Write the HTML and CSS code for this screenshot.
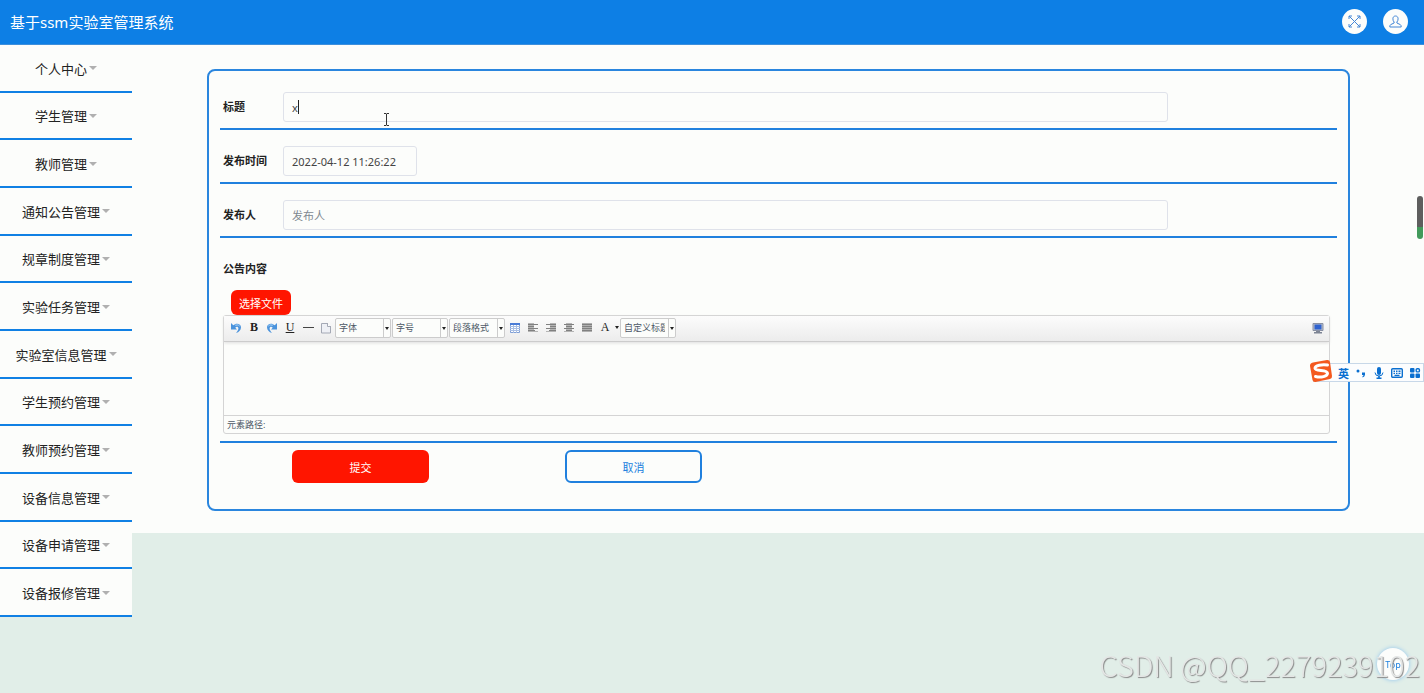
FILE: index.html
```html
<!DOCTYPE html>
<html lang="zh-CN">
<head>
  <meta charset="UTF-8">
  <meta name="viewport" content="width=device-width, initial-scale=1">
  <title>基于ssm实验室管理系统</title>
  <link rel="stylesheet" href="styles.css">
</head>
<body>
  <header class="navbar">
    <h1 class="navbar-title">基于ssm实验室管理系统</h1>
    <div class="navbar-tools">
      <button type="button" class="round-button" aria-label="全屏">
        <svg width="13" height="13" viewBox="0 0 13 13"><path d="M1 1l11 11M12 1L1 12M1 4V1h3M9 1h3v3M12 9v3H9M4 12H1V9"/></svg>
      </button>
      <button type="button" class="round-button" aria-label="用户">
        <svg width="13" height="13" viewBox="0 0 13 13"><path d="M6.500 1C4.800 1 3.900 2.200 3.900 3.800c0 1.500.5 2.500 1.200 3.200v1L1.700 9.600C1 10 .8 10.800.8 12h11.400c0-1.200-.2-2-.9-2.400L7.900 8V7c.7-.7 1.200-1.700 1.200-3.200C9.100 2.200 8.200 1 6.500 1z"/></svg>
      </button>
    </div>
  </header>

  <div class="page">
    <nav class="sidebar">
      <a href="#">个人中心</a>
      <a href="#">学生管理</a>
      <a href="#">教师管理</a>
      <a href="#">通知公告管理</a>
      <a href="#">规章制度管理</a>
      <a href="#">实验任务管理</a>
      <a href="#">实验室信息管理</a>
      <a href="#">学生预约管理</a>
      <a href="#">教师预约管理</a>
      <a href="#">设备信息管理</a>
      <a href="#">设备申请管理</a>
      <a href="#">设备报修管理</a>
    </nav>

    <main class="content">
      <form class="card">
        <div class="form-row">
          <label for="title">标题</label>
          <div class="field">
            <input type="text" id="title" value="x">
            <span class="text-caret"></span>
            <svg class="mouse" width="7" height="13" viewBox="0 0 7 13"><path d="M1 .5h2l.5.5.5-.5h2M3.500 1v11M1 12.500h2l.5-.5.5.5h2"/></svg>
          </div>
        </div>
        <div class="form-row">
          <label for="time">发布时间</label>
          <input type="text" id="time" class="short" value="2022-04-12 11:26:22">
        </div>
        <div class="form-row">
          <label for="author">发布人</label>
          <div class="field">
            <input type="text" id="author" placeholder="发布人">
          </div>
        </div>
        <div class="form-row editor-row">
          <label for="body">公告内容</label>
          <button type="button" class="file-button">选择文件</button>
          <div class="editor">
            <div class="toolbar">
              <button type="button" aria-label="撤销">
                <svg width="12" height="12" viewBox="0 0 12 12"><path fill="#4b93dc" d="M1 1v6.500h6L5.300 5.800c1.200-1.600 3.100-1 3.100.8 0 1.400-.9 2.700-2.400 4.400 3-.9 5-3 5-5.800C11 1.800 6.300.2 3.300 3.300z"/><path fill="#9bc9f3" d="M5 2.800c2.300-1.400 5-.3 5 2.200-.9-1.700-2.700-2-4.500-1z"/></svg>
              </button>
              <button type="button" class="letter bold">B</button>
              <button type="button" aria-label="重做">
                <svg width="12" height="12" viewBox="0 0 12 12"><path fill="#4b93dc" d="M11 1v6.500H5l1.700-1.700C5.500 4.200 3.600 4.800 3.600 6.600c0 1.400.9 2.700 2.400 4.400C3 10.100 1 8 1 5.200 1 1.800 5.700.2 8.700 3.300z"/><path fill="#9bc9f3" d="M7 2.800C4.700 1.400 2 2.500 2 5c.9-1.700 2.700-2 4.500-1z"/></svg>
              </button>
              <button type="button" class="letter underline">U</button>
              <button type="button" aria-label="分隔线">
                <svg width="12" height="12" viewBox="0 0 12 12"><path fill="#444" d="M1 5h11v1H1z"/></svg>
              </button>
              <button type="button" aria-label="清空文档">
                <svg width="12" height="12" viewBox="0 0 12 12"><path fill="#eef0f5" stroke="#a4a9b5" d="M1.500 1.500h6l3 3v6.500h-9z"/><path fill="#fff" stroke="#a4a9b5" d="M7.500 1v3.500H11"/></svg>
              </button>
              <span class="combo"><select aria-label="字体"><option>字体</option></select></span>
              <span class="combo"><select aria-label="字号"><option>字号</option></select></span>
              <span class="combo"><select aria-label="段落格式"><option>段落格式</option></select></span>
              <button type="button" aria-label="表格">
                <svg width="12" height="12" viewBox="0 0 12 12"><path fill="#fff" stroke="#7f9fd6" d="M1.500 1.500h9v9h-9z"/><path fill="#4a7cd6" d="M1 1h10v2H1z"/><path stroke="#a9bfe4" d="M1 4.500h10M1 6.500h10M1 8.500h10M4.500 3v8M7.500 3v8"/></svg>
              </button>
              <button type="button" aria-label="左对齐">
                <svg width="12" height="12" viewBox="0 0 12 12"><path stroke="#808080" d="M1 2.500h10M1 4.500h6M1 6.500h10M1 8.500h7"/><path stroke="#b5b5b5" d="M1 1.500h6M1 3.500h6M1 5.500h6M1 7.500h6M1 9.500h10"/></svg>
              </button>
              <button type="button" aria-label="右对齐">
                <svg width="12" height="12" viewBox="0 0 12 12"><path stroke="#808080" d="M1 2.500h10M5 4.500h6M1 6.500h10M4 8.500h7"/><path stroke="#b5b5b5" d="M5 1.500h6M5 3.500h6M5 5.500h6M5 7.500h6M1 9.500h10"/></svg>
              </button>
              <button type="button" aria-label="居中">
                <svg width="12" height="12" viewBox="0 0 12 12"><path stroke="#808080" d="M1 2.500h10M3 4.500h6M1 6.500h10M3 8.500h6"/><path stroke="#b5b5b5" d="M3 1.500h6M3 3.500h6M3 5.500h6M3 7.500h6M1 9.500h10"/></svg>
              </button>
              <button type="button" aria-label="两端对齐">
                <svg width="12" height="12" viewBox="0 0 12 12"><path fill="#b0b0b0" d="M1 1h10v9H1z"/><path stroke="#808080" d="M1 2.500h10M1 4.500h10M1 6.500h10M1 8.500h10"/></svg>
              </button>
              <button type="button" class="letter">A</button>
              <button type="button" class="drop" aria-label="字体颜色"></button>
              <span class="combo"><select aria-label="自定义标题"><option>自定义标题</option></select></span>
              <button type="button" class="fullscreen" aria-label="全屏编辑">
                <svg width="12" height="12" viewBox="0 0 12 12"><path fill="#b9bfcc" stroke="#8990a3" d="M1 1.500h10v7H1z"/><path fill="#2f62cf" d="M2.500 2.500h7v5h-7z"/><path fill="#7d8494" d="M4 9h4v1h2v1.500H2V10h2z"/></svg>
              </button>
            </div>
            <textarea id="body"></textarea>
            <div class="path">元素路径:</div>
          </div>
        </div>
        <div class="actions">
          <button type="submit" class="submit">提交</button>
          <button type="button" class="cancel">取消</button>
        </div>
      </form>
    </main>
  </div>

  <div class="scroll-mark"></div>

  <div class="ime">
    <svg class="ime-logo" width="24" height="24" viewBox="0 0 24 24"><path fill="#f4591f" d="M4 3.500L18 1q2.500-.3 3 2l2 14q.3 2.500-2 3L6.500 23Q4 23.300 3.500 21L1 7Q.8 4 4 3.500z"/><path fill="none" stroke="#fff" stroke-width="3" stroke-linecap="round" d="M18.500 6C13 5 6 6.500 6 9.200c0 3.300 12.500 1.200 12.500 5C18.500 17.300 12 19 6.500 17.500"/></svg>
    <span>英</span>
    <svg width="12" height="12" viewBox="0 0 12 12"><circle cx="3" cy="4" r="1.500"/><path d="M7 5.500h3v2.200Q9.800 9.600 7.500 10.500V9.300Q8.400 9 8.500 8H7z"/></svg>
    <svg width="12" height="12" viewBox="0 0 12 12"><rect x="4" y="0" width="4" height="8" rx="2"/><path fill="none" stroke="#0a6fd0" d="M2 5.500Q2.200 9 6 9t4-3.500"/><path d="M5.200 9h1.600v1.600H8.500V12h-5v-1.400h1.700z"/></svg>
    <svg width="12" height="12" viewBox="0 0 12 12"><rect x=".7" y="1.700" width="10.600" height="8.600" rx="1" fill="none" stroke="#0a6fd0" stroke-width="1.400"/><path d="M2.500 3.500H4V5H2.500zM5 3.500h1.500V5H5zM7.500 3.500H9.500V5h-2zM2.500 5.700H4v1.200H2.500zM5 5.700h1.500v1.200H5zM7.500 5.700h2v1.200h-2zM3.500 7.800h5V9h-5z"/></svg>
    <svg width="12" height="12" viewBox="0 0 12 12"><rect x="1" y="1" width="4.500" height="4.500" rx="1"/><rect x="1" y="6.500" width="4.500" height="4.500" rx="1"/><rect x="6.500" y="6.500" width="4.500" height="4.500" rx="1"/><rect x="7.200" y="1.700" width="3.200" height="3.200" rx="1" fill="none" stroke="#0a6fd0" stroke-width="1.400"/></svg>
  </div>

  <button type="button" class="back-top">Top</button>
  <div class="watermark">CSDN @QQ_2279239102</div>
</body>
</html>
```

FILE: styles.css
```css
* {
  box-sizing: border-box;
}
body {
  margin: 0;
  min-height: 100vh;
  background: #e1eee8;
  color: #222;
  font-family: "Noto Sans", "Noto Sans CJK SC", sans-serif;
  font-size: 11px;
}
button, input, select, textarea {
  font-family: inherit;
  font-size: inherit;
}
button {
  padding: 0;
  border: none;
  cursor: pointer;
}

/* top bar */
.navbar {
  display: flex;
  align-items: center;
  justify-content: space-between;
  height: 45px;
  padding: 0 16px 2px 10px;
  background: #0d7fe5;
  border-bottom: 1px solid #3d8fdc;
}
.navbar-title {
  margin: 0;
  color: #fff;
  font-size: 15px;
  font-weight: 400;
}
.navbar-tools {
  display: flex;
  gap: 16px;
}
.round-button {
  display: flex;
  align-items: center;
  justify-content: center;
  width: 25px;
  height: 25px;
  border-radius: 50%;
  background: #fcfdfb;
}
.round-button svg {
  fill: none;
  stroke: #4286d6;
}

/* side menu */
.page {
  display: flex;
  align-items: flex-start;
}
.sidebar {
  display: grid;
  grid-auto-rows: 1fr;
  flex: none;
  width: 132px;
  min-height: 572px;
  background: #fcfdfb;
}
.sidebar a {
  display: flex;
  align-items: center;
  justify-content: center;
  gap: 2px;
  padding-top: 1px;
  border-bottom: 2px solid #1080e4;
  color: #222;
  font-size: 13px;
  text-decoration: none;
}
.sidebar a::after {
  content: "";
  border: 4px solid transparent;
  border-top-color: #b0b0b0;
  border-bottom: none;
}

/* form */
.content {
  flex: 1;
  min-width: 0;
  padding: 24px 74px 22px 75px;
  background: #fcfdfb;
}
.card {
  padding: 5px 11px 26px;
  border: 2px solid #2a86de;
  border-radius: 8px;
}
.form-row {
  display: flex;
  padding: 16px 7px 6px 3px;
  border-bottom: 2px solid #2080de;
}
.form-row label {
  flex: none;
  width: 60px;
  line-height: 30px;
  font-weight: 700;
}
.field {
  position: relative;
  flex: 1;
  margin-right: 162px;
}
.form-row input {
  display: block;
  width: 100%;
  height: 30px;
  padding: 0 8px;
  border: 1px solid #dfe2ea;
  border-radius: 3px;
  outline: none;
  background: #fcfdfb;
  color: #444;
}
.form-row input.short {
  width: 134px;
}
.form-row input::placeholder {
  color: #808890;
}
.text-caret {
  position: absolute;
  left: 15px;
  top: 8px;
  width: 1px;
  height: 14px;
  background: #222;
}
.mouse {
  position: absolute;
  left: 100px;
  top: 21px;
  fill: none;
  stroke: #333;
}
.editor-row {
  display: block;
  padding-bottom: 7px;
}
.editor-row label {
  display: block;
}
.file-button {
  display: block;
  width: 60px;
  height: 25px;
  margin: 6px 0 0 8px;
  border-radius: 6px;
  background: #ff1500;
  color: #fff;
}

/* rich text editor */
.editor {
  border: 1px solid #d4d4d4;
  border-radius: 3px;
}
.toolbar {
  position: relative;
  display: flex;
  align-items: center;
  height: 26px;
  padding: 0 2px 2px 3px;
  border-bottom: 1px solid #ccc;
  background: linear-gradient(#fcfcfc, #ececec);
  box-shadow: 0 1px 3px #ddd;
}
.toolbar button {
  display: flex;
  align-items: center;
  justify-content: center;
  width: 18px;
  height: 18px;
  background: none;
  color: #222;
}
.toolbar .letter {
  font-family: "Liberation Serif", serif;
  font-size: 12px;
}
.toolbar .bold {
  font-weight: 700;
}
.toolbar .underline {
  text-decoration: underline;
}
.toolbar .drop {
  width: 6px;
}
.drop::after, .combo::after {
  content: "";
  border: 2px solid transparent;
  border-top: 3px solid #222;
  border-bottom: none;
}
.combo {
  position: relative;
  width: 56px;
  height: 20px;
  margin-right: 1px;
  padding-right: 6px;
  border: 1px solid #ccc;
  border-radius: 2px;
  background: #fcfdfb;
}
.combo::after {
  position: absolute;
  right: 1px;
  top: 8px;
}
.combo select {
  display: block;
  width: 100%;
  height: 18px;
  padding: 0 3px;
  border: none;
  border-right: 1px solid #ccc;
  appearance: none;
  background: none;
  color: #4c5866;
  font-size: 9px;
}
.toolbar .fullscreen {
  margin-left: auto;
}
.editor textarea {
  display: block;
  width: 100%;
  height: 73px;
  padding: 8px;
  border: none;
  outline: none;
  resize: none;
  background: transparent;
}
.path {
  padding-left: 3px;
  border-top: 1px solid #d4d4d4;
  color: #4c5866;
  font-size: 9px;
  line-height: 17px;
}
.actions {
  display: flex;
  gap: 136px;
  padding: 7px 0 0 72px;
}
.actions button {
  width: 137px;
  height: 33px;
  border-radius: 6px;
}
.actions .submit {
  background: #ff1500;
  color: #fff;
}
.actions .cancel {
  border: 2px solid #2080de;
  background: #fcfdfb;
  color: #2080de;
}

/* floating things */
.scroll-mark {
  position: fixed;
  right: 1px;
  top: 196px;
  width: 6px;
  height: 43px;
  border-radius: 3px;
  background: linear-gradient(#5e5e5e 72%, #429a5b 72%);
}
.ime {
  position: fixed;
  right: 0;
  top: 363px;
  display: flex;
  align-items: center;
  gap: 6px;
  height: 19px;
  padding: 0 2px 0 24px;
  border: 1px solid #c8d8e8;
  background: #fcfdfe;
  color: #0a6fd0;
  font-weight: 700;
}
.ime svg {
  fill: #0a6fd0;
}
.ime .ime-logo {
  position: absolute;
  left: -5px;
  top: -5px;
}
.back-top {
  position: fixed;
  right: 15px;
  bottom: 13px;
  width: 32px;
  height: 32px;
  border-radius: 50%;
  background: #fcfdfb;
  box-shadow: 0 0 4px #8fc4ee;
  color: #2080de;
  font-size: 9px;
}
.watermark {
  position: fixed;
  right: 4px;
  bottom: 14px;
  color: #e4e6e5;
  font-family: "Noto Sans CJK SC", sans-serif;
  font-size: 29px;
  font-weight: 300;
  line-height: 30px;
  text-shadow: 1px 1px 1px #888;
  pointer-events: none;
}
```
